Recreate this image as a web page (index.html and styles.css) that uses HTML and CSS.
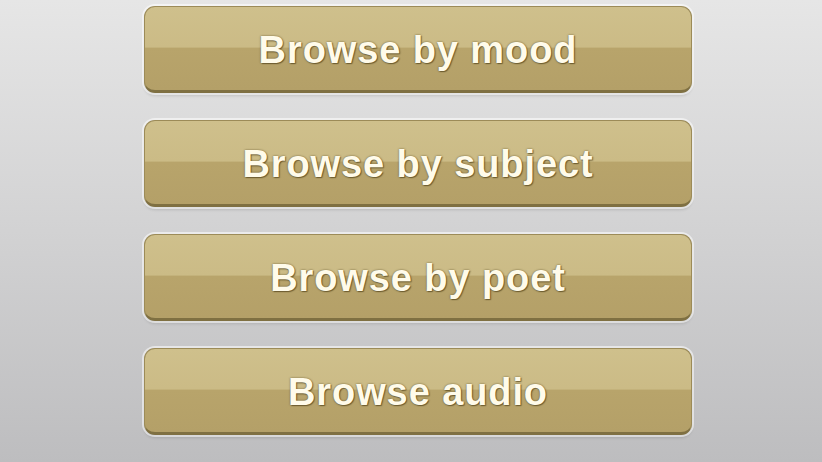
FILE: index.html
```html
<!DOCTYPE html>
<html lang="en">
<head>
    <meta charset="UTF-8">
    <meta name="viewport" content="width=device-width, initial-scale=1.0">
    <title>Browse</title>
    <link rel="stylesheet" href="styles.css">
</head>
<body>
    <div class="menu">
        <button class="browse-btn">Browse by mood</button>
        <button class="browse-btn">Browse by subject</button>
        <button class="browse-btn">Browse by poet</button>
        <button class="browse-btn">Browse audio</button>
    </div>
</body>
</html>
```

FILE: styles.css
```css
html, body {
    height: 100%;
}
body {
    margin: 0;
    background: linear-gradient(to bottom, #e6e6e6 0%, #d2d2d3 50%, #bdbdbf 100%);
    font-family: "Liberation Sans", Arial, sans-serif;
}
.menu {
    display: flex;
    flex-direction: column;
    align-items: center;
    gap: 27px;
    padding-top: 6px;
}
.browse-btn {
    width: 548px;
    height: 87px;
    margin-left: 14px;
    padding: 4px 0 0;
    border: 1px solid #9c8b58;
    border-bottom: 3px solid #7f7042;
    border-radius: 11px;
    background: linear-gradient(to bottom,
        #cfc08c 0%, #cbbb86 48%,
        #b8a46b 50%, #b4a068 100%);
    box-shadow: 0 0 0 2px rgba(255, 255, 255, 0.55), 0 3px 3px rgba(0, 0, 0, 0.12);
    color: #fffbea;
    font-family: "Liberation Sans", Arial, sans-serif;
    font-size: 38px;
    font-weight: bold;
    letter-spacing: 0.9px;
    text-shadow: 0 0 2px rgba(60, 45, 10, 0.7), 1px 1px 1px rgba(60, 45, 10, 0.5);
    cursor: pointer;
}
```
